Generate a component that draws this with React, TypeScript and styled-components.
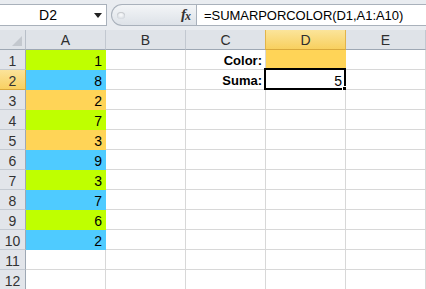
import React from "react";
import styled, { createGlobalStyle, css } from "styled-components";

const GlobalStyle = createGlobalStyle`
  html, body { margin: 0; padding: 0; background: #fff; }
  body { overflow: hidden; }
`;

type Fill = "g" | "b" | "o";

const FILLS: Record<Fill, string> = {
  g: "#bfff00",
  b: "#4fcbff",
  o: "#ffd457",
};

const COLUMN_A: [number, Fill][] = [
  [1, "g"],
  [8, "b"],
  [2, "o"],
  [7, "g"],
  [3, "o"],
  [9, "b"],
  [3, "g"],
  [7, "b"],
  [6, "g"],
  [2, "b"],
];

const COLS = ["A", "B", "C", "D", "E"];
const ROW_COUNT = 12;

const Window = styled.div`
  width: 426px;
  height: 289px;
  overflow: hidden;
  font-family: "Liberation Sans", Arial, sans-serif;
  color: #000;
`;

const FormulaBar = styled.div`
  display: flex;
  height: 30px;
  box-sizing: border-box;
  padding: 4px 0;
  background: #e9ecf0;
`;

const NameBox = styled.div`
  display: flex;
  align-items: center;
  width: 107px;
  box-sizing: border-box;
  background: #fff;
  border-top: 1px solid #a9b1bb;
  border-bottom: 1px solid #a9b1bb;
  border-right: 1px solid #a9b1bb;
`;

const NameText = styled.span`
  flex: 1;
  text-align: center;
  font-size: 14px;
  padding-left: 2px;
`;

const DropArrow = styled.svg`
  width: 8px;
  height: 5px;
  margin-right: 4px;
`;

const ButtonsPill = styled.div`
  display: flex;
  align-items: center;
  justify-content: space-between;
  width: 85px;
  margin-left: 4px;
  box-sizing: border-box;
  padding: 0 6px 0 5px;
  border: 1px solid #a9b1bb;
  border-right: none;
  border-radius: 11px 0 0 11px;
  background: linear-gradient(#f3f5f7, #dde2e8);
`;

const Grip = styled.span`
  width: 8px;
  height: 7px;
  border-radius: 50%;
  background: radial-gradient(circle at 50% 40%, #f4f6f8 20%, #c3c9d1 100%);
  box-shadow: inset 0 1px 1px rgba(0, 0, 0, 0.15);
`;

const Fx = styled.span`
  font-family: "Liberation Serif", "DejaVu Serif", serif;
  font-style: italic;
  font-weight: bold;
  font-size: 15px;
  color: #333;
  letter-spacing: -1px;

  sub {
    font-size: 12px;
    vertical-align: -1px;
  }
`;

const FormulaInput = styled.div`
  flex: 1;
  display: flex;
  align-items: center;
  box-sizing: border-box;
  padding-left: 7px;
  background: #fff;
  border: 1px solid #a9b1bb;
  border-right: none;
  font-size: 13px;
  letter-spacing: -0.05px;
  white-space: nowrap;
`;

const Sheet = styled.div`
  display: grid;
  grid-template-columns: 26px repeat(4, 80px) 1fr;
  grid-auto-rows: 20px;
`;

const headerBase = css`
  display: flex;
  align-items: center;
  justify-content: center;
  box-sizing: border-box;
  font-size: 14px;
  color: #2e2e2e;
`;

const Corner = styled.div`
  ${headerBase};
  position: relative;
  background: #dfe3e8;
  border-right: 1px solid #b8bfc8;
  border-bottom: 1px solid #9ea8b4;
`;

const CornerTriangle = styled.span`
  position: absolute;
  right: 3px;
  bottom: 3px;
  width: 0;
  height: 0;
  border-left: 10px solid transparent;
  border-bottom: 10px solid #c3c8ce;
`;

const ColHeader = styled.div<{ $active?: boolean }>`
  ${headerBase};
  background: #dfe3e8;
  border-right: 1px solid #c2c8d0;
  border-bottom: 1px solid #9ea8b4;

  ${({ $active }) =>
    $active &&
    css`
      background: linear-gradient(#fbe49a, #f8d05f);
      border-right: 1px solid #e2b449;
      border-left: 1px solid #e2b449;
      border-bottom: 1px solid #d9a93c;
      margin-left: -1px;
    `}
`;

const RowHeader = styled.div<{ $active?: boolean }>`
  ${headerBase};
  padding-top: 2px;
  background: #e2e5ea;
  color: #333;
  border-right: 1px solid #9ea8b4;
  border-bottom: 1px solid #c4cad2;

  ${({ $active }) =>
    $active &&
    css`
      background: linear-gradient(#fbe39a, #f8d062);
      border-bottom: 1px solid #d9a93c;
      border-right: 1px solid #d9a93c;
    `}
`;

const Cell = styled.div<{ $fill?: string; $bold?: boolean }>`
  position: relative;
  display: flex;
  align-items: flex-end;
  justify-content: flex-end;
  box-sizing: border-box;
  padding-right: 3px;
  font-size: 14px;
  line-height: 16px;
  background: ${({ $fill }) => $fill ?? "#fff"};
  border-right: 1px solid ${({ $fill }) => $fill ?? "#d8d8d8"};
  border-bottom: 1px solid ${({ $fill }) => $fill ?? "#d8d8d8"};
  font-weight: ${({ $bold }) => ($bold ? "bold" : "normal")};
  ${({ $bold }) => $bold && "font-size: 13px;"}
`;

const Selection = styled.div`
  position: absolute;
  top: -2px;
  left: -2px;
  right: -1px;
  bottom: -1px;
  border: 2px solid #000;
  pointer-events: none;
`;

const FillHandle = styled.span`
  position: absolute;
  right: -4px;
  bottom: -4px;
  width: 5px;
  height: 5px;
  background: #000;
  border: 1px solid #fff;
  border-right: none;
  border-bottom: none;
`;

function renderCell(row: number, col: string) {
  const key = `${col}${row}`;
  if (col === "A" && row <= COLUMN_A.length) {
    const [value, fill] = COLUMN_A[row - 1];
    return (
      <Cell key={key} $fill={FILLS[fill]}>
        {value}
      </Cell>
    );
  }
  if (col === "C" && row === 1) return <Cell key={key} $bold>Color:</Cell>;
  if (col === "C" && row === 2) return <Cell key={key} $bold>Suma:</Cell>;
  if (col === "D" && row === 1) return <Cell key={key} $fill={FILLS.o} />;
  if (col === "D" && row === 2)
    return (
      <Cell key={key}>
        5
        <Selection>
          <FillHandle />
        </Selection>
      </Cell>
    );
  return <Cell key={key} />;
}

export default function App() {
  const rows = Array.from({ length: ROW_COUNT }, (_, i) => i + 1);

  return (
    <>
      <GlobalStyle />
      <Window>
        <FormulaBar>
          <NameBox>
            <NameText>D2</NameText>
            <DropArrow viewBox="0 0 8 5">
              <polygon points="0,0 8,0 4,5" fill="#222" />
            </DropArrow>
          </NameBox>
          <ButtonsPill>
            <Grip />
            <Fx>
              f<sub>x</sub>
            </Fx>
          </ButtonsPill>
          <FormulaInput>=SUMARPORCOLOR(D1,A1:A10)</FormulaInput>
        </FormulaBar>

        <Sheet>
          <Corner>
            <CornerTriangle />
          </Corner>
          {COLS.map((c) => (
            <ColHeader key={c} $active={c === "D"}>
              {c}
            </ColHeader>
          ))}
          {rows.map((r) => (
            <React.Fragment key={r}>
              <RowHeader $active={r === 2}>{r}</RowHeader>
              {COLS.map((c) => renderCell(r, c))}
            </React.Fragment>
          ))}
        </Sheet>
      </Window>
    </>
  );
}
